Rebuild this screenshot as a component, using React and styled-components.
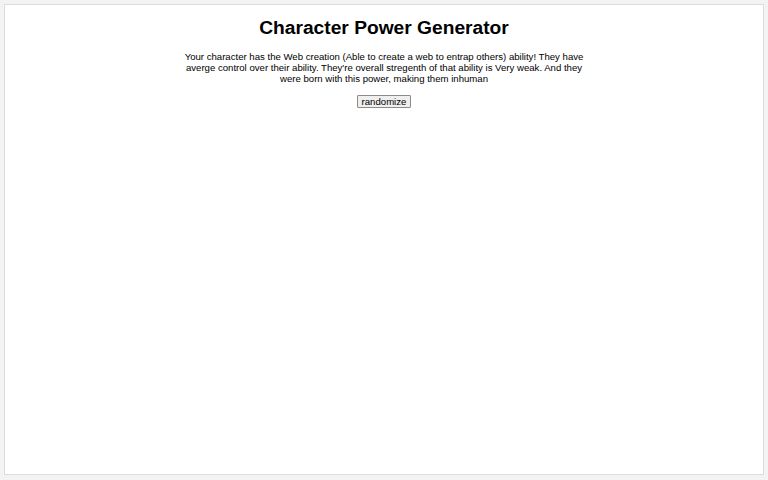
import React, { useState } from "react";
import styled, { createGlobalStyle } from "styled-components";

const GlobalStyle = createGlobalStyle`
  html, body { margin: 0; padding: 0; height: 100%; }
  body {
    background: #f3f3f3;
    font-family: "Liberation Sans", Arial, sans-serif;
    color: #000;
  }
  #root { height: 100%; }
`;

const Frame = styled.div`
  box-sizing: border-box;
  height: 480px;
  padding: 4px 4px 5px 4px;
`;

const Panel = styled.main`
  box-sizing: border-box;
  height: 100%;
  background: #fff;
  border: 1px solid #dcdcdc;
  display: flex;
  flex-direction: column;
  align-items: center;
  padding-top: 12px;
`;

const Title = styled.h1`
  margin: 0;
  font-size: 19.2px;
  font-weight: bold;
  line-height: 22px;
`;

const Description = styled.p`
  margin: 12px 0 0;
  width: 404px;
  text-align: center;
  font-size: 9.6px;
  line-height: 11px;
`;

const RandomButton = styled.button`
  margin-top: 11px;
  font-family: "Liberation Sans", Arial, sans-serif;
  font-size: 9.6px;
  line-height: 11px;
  padding: 0 4px;
  background: #efefef;
  color: #000;
  border: 1px solid #8a8a8a;
  border-radius: 1px;
`;

const abilities = [
  ["Web creation", "Able to create a web to entrap others"],
  ["Fire breath", "Able to breathe fire at will"],
  ["Invisibility", "Able to vanish from sight"],
];
const controls = ["averge", "great", "poor"];
const strengths = ["Very weak", "Strong", "Moderate"];
const origins = [
  "were born with this power, making them inhuman",
  "gained this power through an accident",
];

const pick = (list) => list[Math.floor(Math.random() * list.length)];

export default function App() {
  const [power, setPower] = useState({
    ability: abilities[0],
    control: controls[0],
    strength: strengths[0],
    origin: origins[0],
  });

  const randomize = () =>
    setPower({
      ability: pick(abilities),
      control: pick(controls),
      strength: pick(strengths),
      origin: pick(origins),
    });

  return (
    <>
      <GlobalStyle />
      <Frame>
        <Panel>
          <Title>Character Power Generator</Title>
          <Description>
            Your character has the {power.ability[0]} ({power.ability[1]}) ability! They have{" "}
            {power.control} control over their ability. They're overall stregenth of that ability
            is {power.strength}. And they {power.origin}
          </Description>
          <RandomButton onClick={randomize}>randomize</RandomButton>
        </Panel>
      </Frame>
    </>
  );
}
